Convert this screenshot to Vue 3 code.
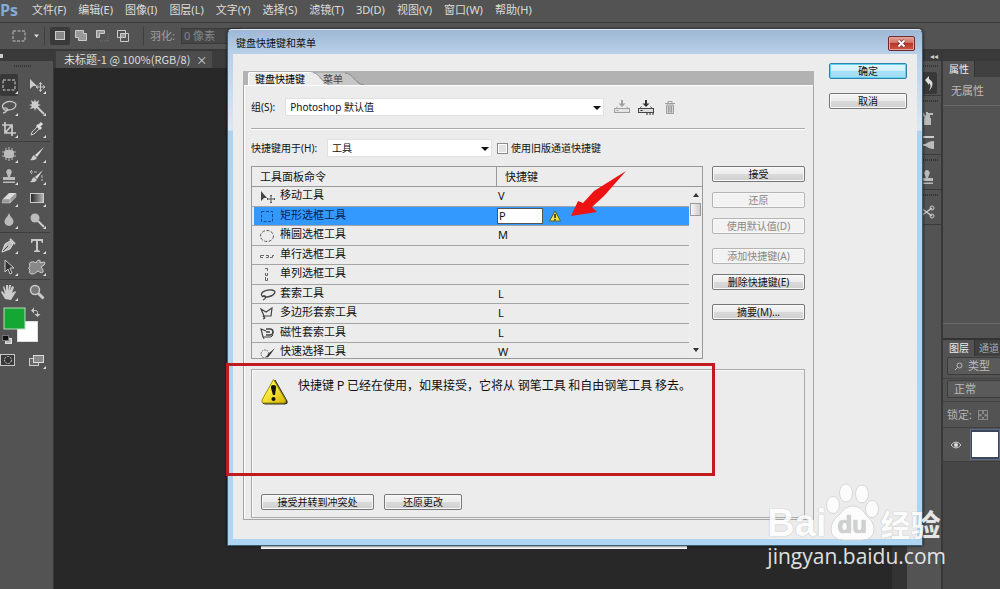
<template>
  <div class="app">
    <nav class="menu-bar">
      <span class="logo">Ps</span>
      <button v-for="item in menus" :key="item" class="menu-item">{{ item }}</button>
    </nav>

    <div class="options-bar">
      <button class="opt-btn preset" aria-label="工具预设">
        <svg width="28" height="14" viewBox="0 0 28 14">
          <rect x="1" y="2" width="12" height="10" fill="none" stroke="#c4c4c4" stroke-dasharray="3 1.5" />
          <path d="M22 5.500h5l-2.500 3z" fill="#ddd" />
        </svg>
      </button>
      <div class="modes">
        <button v-for="mode in modes" :key="mode.name" class="opt-btn" :class="{ active: mode.active }" :aria-label="mode.name">
          <svg width="14" height="14" viewBox="0 0 14 14" v-html="mode.body"></svg>
        </button>
      </div>
      <label class="feather" for="feather">羽化:</label>
      <input id="feather" class="feather-input" value="0 像素" />
    </div>

    <div class="workspace">
      <aside class="toolbox">
        <div class="dock-head left"><i></i></div>
        <div class="grip"></div>
        <div v-for="(group, g) in toolGroups" :key="g" class="tool-group">
          <button
            v-for="tool in group"
            :key="tool.name"
            class="tool"
            :class="{ active: tool.active, single: tool.single }"
            :aria-label="tool.name"
          >
            <svg width="18" height="18" viewBox="0 0 18 18" v-html="tool.body"></svg>
          </button>
        </div>
        <svg class="swatches" width="54" height="66" viewBox="0 0 54 66">
          <rect x="17.500" y="17.500" width="20" height="20" fill="#fff" stroke="#ddd" />
          <rect x="4" y="4" width="21" height="21" fill="#15a733" stroke="#b9dcbe" />
          <path d="M33 6.500h2.500q2 0 2 2v2" fill="none" stroke="#c8c8c8" />
          <path d="M31 6.500l3-3v6zM37.500 13l-3-3h6z" fill="#c8c8c8" />
          <rect x="5.500" y="34.500" width="6" height="5" fill="#bbb" stroke="#ddd" />
          <rect x="2.500" y="31.500" width="6" height="5" fill="#111" stroke="#777" />
          <rect x="0.500" y="50.500" width="14" height="11" fill="#3a3a3a" stroke="#c8c8c8" />
          <circle cx="8" cy="56" r="3.500" fill="#333" stroke="#c8c8c8" stroke-dasharray="2 1" />
          <rect x="29.500" y="54.500" width="9" height="7" fill="#666" stroke="#ccc" />
          <rect x="33.500" y="51.500" width="10" height="7" fill="#888" stroke="#ddd" />
          <path d="M46 65v-3l-3 3z" fill="#ddd" />
        </svg>
      </aside>

      <main class="document">
        <div class="doc-tabs">
          <div class="doc-tab">
            <span>未标题-1 @ 100%(RGB/8)</span>
            <button aria-label="关闭文档">×</button>
          </div>
        </div>
        <div class="stage">
          <div class="paper"></div>
          <div class="stage-scroll"></div>
        </div>
      </main>

      <aside class="icon-dock">
        <div class="dock-head right">◂◂</div>
        <div v-for="(group, g) in dockGroups" :key="g" class="dock-group">
          <div class="grip"></div>
          <button v-for="item in group" :key="item.name" class="dock-btn" :class="{ active: item.active }" :aria-label="item.name">
            <svg width="18" height="18" viewBox="0 0 18 18" v-html="item.body"></svg>
          </button>
        </div>
      </aside>

      <aside class="panels">
        <div class="dock-head"></div>
        <div class="panel-tabs"><button class="active">属性</button></div>
        <p class="empty">无属性</p>
        <div class="properties"></div>
        <div class="properties-foot"></div>
        <div class="panel-tabs layers-tabs">
          <button class="active">图层</button>
          <button>通道</button>
        </div>
        <div class="layer-row">
          <button class="field filter">
            <svg width="9" height="9" viewBox="0 0 9 9"><circle cx="5.500" cy="3.500" r="2.500" fill="none" stroke="#bbb" /><path d="M3.500 5.500L1 8" stroke="#bbb" /></svg>
            <span>类型</span>
          </button>
        </div>
        <div class="layer-row"><button class="field">正常</button></div>
        <div class="layer-row lock">
          <span>锁定:</span>
          <svg width="10" height="10" viewBox="0 0 10 10">
            <rect width="10" height="10" fill="#888" />
            <path d="M1 1h3v3H1zM6 1h3v3H6zM3.500 4h3v3h-3zM1 6.500h3V9H1zM6 6.500h3V9H6z" fill="#555" />
          </svg>
        </div>
        <div class="layer">
          <svg width="12" height="10" viewBox="0 0 12 10">
            <path d="M1 5q5-6 10 0q-5 6-10 0z" fill="none" stroke="#ccc" />
            <circle cx="6" cy="5" r="2" fill="#ddd" />
          </svg>
          <div class="thumb"><i></i></div>
        </div>
        <div class="layers-rest"></div>
      </aside>
    </div>

    <section class="dialog" role="dialog" aria-labelledby="dialog-title">
      <header class="title-bar">
        <h1 id="dialog-title">键盘快捷键和菜单</h1>
        <button class="close" aria-label="关闭">
          <svg width="11" height="9" viewBox="0 0 11 9">
            <path d="M2.500 1.500l6 6M8.500 1.500l-6 6" stroke="#6a3030" stroke-width="3.500" />
            <path d="M2.500 1.500l6 6M8.500 1.500l-6 6" stroke="#fff" stroke-width="2" />
          </svg>
        </button>
      </header>

      <div class="dialog-body">
        <div class="main">
          <div class="tabs">
            <svg width="130" height="14" viewBox="0 0 130 14">
              <path d="M70 14V2h32c8 0 10 11 19 12z" fill="#c6c6c6" />
              <path d="M102 2c8 0 10 11 19 12" fill="none" stroke="#888" />
              <path d="M5 14V3q0-2 2-2h60c10 0 10 12 20 13z" fill="#ececec" />
              <path d="M5.500 14V3q0-1.500 2-1.500h59.500" fill="none" stroke="#fff" />
              <path d="M70 1.500c8 2 9 11 17 12.500" fill="none" stroke="#999" />
            </svg>
            <button class="tab active">键盘快捷键</button>
            <button class="tab">菜单</button>
          </div>

          <div class="panel">
            <div class="row">
              <label for="group">组(S):</label>
              <div class="select group-select">
                <select id="group"><option>Photoshop 默认值</option></select>
              </div>
              <div class="set-actions">
                <button class="icon-btn dim" aria-label="存储">
                  <svg width="16" height="15" viewBox="0 0 16 15">
                    <path d="M8 0v4" stroke="#555" stroke-width="2" />
                    <path d="M4.500 3.500h7L8 7z" fill="#555" />
                    <path d="M3.500 6.500L1 9.500M12.500 6.500l2.500 3" fill="none" stroke="#666" />
                    <rect x="0.500" y="8.500" width="15" height="4" fill="#ddd" stroke="#555" />
                    <path d="M2.500 10.500h2" stroke="#555" />
                  </svg>
                </button>
                <button class="icon-btn" aria-label="新建">
                  <svg width="16" height="15" viewBox="0 0 16 15">
                    <path d="M8 0v4" stroke="#333" stroke-width="2" />
                    <path d="M4.500 3.500h7L8 7z" fill="#333" />
                    <path d="M3.500 6.500L1 9.500M12.500 6.500l2.500 3" fill="none" stroke="#555" />
                    <rect x="0.500" y="8.500" width="15" height="4" fill="#ddd" stroke="#444" />
                    <path d="M2.500 10.500h2M8 14h2M11 14h2M14 14h2" stroke="#222" />
                  </svg>
                </button>
                <button class="icon-btn dim" aria-label="删除">
                  <svg width="16" height="15" viewBox="0 0 16 15">
                    <path d="M3 3.500h10M6 3V1.500h4V3" fill="none" stroke="#555" />
                    <path d="M4.500 5h7v8.500h-7zM6.500 6v6.500M8 6v6.500M9.500 6v6.500" fill="#bbb" stroke="#555" />
                  </svg>
                </button>
              </div>
            </div>

            <hr />

            <div class="row">
              <label for="scope">快捷键用于(H):</label>
              <div class="select scope-select">
                <select id="scope"><option>工具</option></select>
              </div>
              <label class="check"><input type="checkbox" />使用旧版通道快捷键</label>
            </div>

            <div class="columns">
              <div class="list">
                <table>
                  <thead>
                    <tr><th class="name">工具面板命令</th><th>快捷键</th></tr>
                  </thead>
                  <tbody>
                    <tr v-for="(row, i) in rows" :key="row.name" :class="{ selected: i === selected }" @click="selected = i">
                      <td>
                        <div class="cell">
                          <svg width="16" height="14" viewBox="0 0 16 14" v-html="row.icon"></svg>
                          <span>{{ row.name }}</span>
                        </div>
                      </td>
                      <td>
                        <div v-if="i === selected" class="edit">
                          <input v-model="row.key" aria-label="快捷键" />
                          <svg width="12" height="12" viewBox="0 0 12 12">
                            <path d="M6 1L11.500 11H0.500z" fill="#f3e53c" stroke="#54602a" />
                            <path d="M6 4v4M6 9v1.500" stroke="#222" stroke-width="1.500" />
                          </svg>
                        </div>
                        <span v-else class="key">{{ row.key }}</span>
                      </td>
                    </tr>
                  </tbody>
                </table>
                <div class="scrollbar"><i class="up"></i><b></b><i class="down"></i></div>
              </div>

              <div class="side">
                <button class="btn">接受</button>
                <button class="btn" disabled>还原</button>
                <button class="btn" disabled>使用默认值(D)</button>
                <button class="btn spaced" disabled>添加快捷键(A)</button>
                <button class="btn">删除快捷键(E)</button>
                <button class="btn spaced">摘要(M)...</button>
              </div>
            </div>

            <div class="notice">
              <div class="message">
                <svg width="28" height="28" viewBox="0 0 28 28">
                  <defs>
                    <linearGradient id="warn" x1="0" y1="0" x2="1" y2="1">
                      <stop offset="0.300" stop-color="#fff34a" />
                      <stop offset="1" stop-color="#d9b400" />
                    </linearGradient>
                  </defs>
                  <path d="M14 2L26 23q1 3-2 3H4q-3 0-2-3z" fill="#333" stroke="#333" />
                  <path d="M12.500 1.500L24.500 22q1 3-1.500 3H3q-3 0-2-3z" fill="url(#warn)" stroke="#a39100" />
                  <path d="M12.500 7q3 0 2.500 3l-1 7h-2l-2-7q-.5-3 2.500-3z" fill="#111" />
                  <circle cx="12.500" cy="21" r="2" fill="#111" />
                </svg>
                <p>快捷键 P 已经在使用，如果接受，它将从 钢笔工具 和自由钢笔工具 移去。</p>
              </div>
              <div class="notice-actions">
                <button class="btn wide">接受并转到冲突处</button>
                <button class="btn">还原更改</button>
              </div>
            </div>
          </div>
        </div>

        <div class="confirm">
          <button class="btn primary">确定</button>
          <button class="btn">取消</button>
        </div>
      </div>

      <div class="highlight"></div>
      <svg class="arrow" width="58" height="48" viewBox="0 0 58 48">
        <path d="M56 0L24 20 13 32 8 30 1 45 27 41 22 36 34 25z" fill="#ee1212" />
      </svg>
    </section>

    <div class="watermark">
      <div class="brand">
        <span class="bai">Bai</span>
        <span class="paw">
          <svg width="54" height="58" viewBox="0 0 54 58">
            <g fill="#fff" stroke="#d4d4d4">
              <ellipse cx="7" cy="22" rx="6.500" ry="8.500" />
              <ellipse cx="20" cy="10" rx="6.500" ry="9" />
              <ellipse cx="36" cy="11" rx="6.500" ry="9" />
              <ellipse cx="46" cy="26" rx="6.500" ry="8.500" />
              <path d="M27 23q8 0 13 9 8 7 8 14 0 11-12 11H18Q5 57 5 46q0-7 8-14 6-9 14-9z" />
            </g>
          </svg>
          <span class="du">du</span>
        </span>
        <span class="jingyan">经验</span>
      </div>
      <div class="site">jingyan.baidu.com</div>
    </div>
  </div>
</template>

<script setup>
import { ref } from 'vue'

const menus = ['文件(F)', '编辑(E)', '图像(I)', '图层(L)', '文字(Y)', '选择(S)', '滤镜(T)', '3D(D)', '视图(V)', '窗口(W)', '帮助(H)']

const modes = [
  { name: '新选区', active: true, body: '<rect x="2.500" y="2.500" width="9" height="8" fill="#888" stroke="#ccc"/>' },
  { name: '添加到选区', body: '<path d="M1.500 1.500h8v3h3v7h-8v-3h-3z" fill="#999" stroke="#ccc"/>' },
  { name: '从选区减去', body: '<path d="M1.500 1.500h8v3h-5v4h-3z" fill="#999" stroke="#ccc"/><path d="M5 12h8V5" fill="none" stroke="#777" stroke-dasharray="1 1"/>' },
  { name: '与选区交叉', body: '<path d="M1.500 1.500h8v7h-8zM4.500 4.500h8v8h-8z" fill="none" stroke="#ccc"/><path d="M5 5h4v3H5z" fill="#999"/>' },
]

const toolGroups = [
  [
    { name: '矩形选框', active: true, body: '<rect x="3" y="4" width="12" height="10" fill="none" stroke="#d0d0d0" stroke-dasharray="3 1.500"/>' },
    { name: '移动', body: '<path d="M2 3v10l3-3h4z" fill="#ccc"/><path d="M12.500 7v8M8.500 11h8M11 8.500l1.500-2 1.500 2M11 13.500l1.500 2 1.500-2M10 9.500L8 11l2 1.500M15 9.500l2 1.500-2 1.500" fill="none" stroke="#ccc"/>' },
    { name: '套索', body: '<path d="M4 11C-1 7 7 2 13 4s2 8-5 8c-6 1-5-3-2-2s1 4-3 5" fill="none" stroke="#ccc" stroke-width="1.300"/>' },
    { name: '魔棒', body: '<path d="M8 8l8 8" stroke="#ccc" stroke-width="2"/><path d="M7 1l1 3 3-2-1 4 3 1-3 1 1 3-3-1-1 3-1-3-4 1 2-3-3-1 3-1-1-4 3 2z" fill="#ccc"/>' },
    { name: '裁剪', body: '<path d="M5 2v11h11M2 5h10v11M5 13l7-8" fill="none" stroke="#ccc" stroke-width="1.700"/>' },
    { name: '吸管', body: '<path d="M3 15l1-3 6-6 2 2-6 6z" fill="none" stroke="#ccc"/><path d="M9 5l4 4M11 6l3-3" stroke="#ddd" stroke-width="3"/>' },
  ],
  [
    { name: '修补', body: '<rect x="4" y="5" width="10" height="8" rx="3" fill="#bbb"/><path d="M6 3v12M9 2v14M12 3v12M2 7h14M2 11h14" stroke="#bbb"/>' },
    { name: '画笔', body: '<path d="M16 2L9 12 7 10z" fill="#ddd"/><path d="M6 10l3 3q-2 3-7 2 2-1 2-3z" fill="#ccc"/>' },
    { name: '仿制图章', body: '<path d="M9 2a3 3 0 0 1 2 5l-1 3h5v3H3v-3h5L7 7a3 3 0 0 1 2-5zM3 14.500h12v1.500H3z" fill="#bbb"/>' },
    { name: '历史记录画笔', body: '<path d="M15 3L9 12 7 10z" fill="#ddd"/><path d="M6 10l3 3q-2 3-7 2 2-1 2-3z" fill="#ccc"/><path d="M2 5h7M4 3L2 5l2 2M14 8v6" stroke="#bbb" fill="none" stroke-dasharray="3 1"/>' },
    { name: '橡皮擦', body: '<path d="M3 10l6-6h7l-6 6z" fill="#ddd"/><path d="M3 10h7v4H2zM10 10l6-6v4l-6 6z" fill="#999" stroke="#ccc" stroke-width=".5"/>' },
    { name: '渐变', body: '<defs><linearGradient id="grad"><stop stop-color="#222"/><stop offset="1" stop-color="#bbb"/></linearGradient></defs><rect x="2.500" y="4.500" width="13" height="9" fill="url(#grad)" stroke="#ccc"/>' },
    { name: '模糊', body: '<path d="M9 2q1 3 3 5c4 5-1 8-3 8s-7-3-3-8q2-2 3-5z" fill="#bbb"/>' },
    { name: '减淡', body: '<circle cx="7" cy="7" r="4.500" fill="#bbb"/><path d="M10 10l6 6" stroke="#ccc" stroke-width="2"/>' },
  ],
  [
    { name: '钢笔', body: '<path d="M2 16l3-8 5-3 3 3-3 5z" fill="#bbb" stroke="#ddd"/><path d="M3 15l5-5" stroke="#444"/><path d="M10 3l5 5" stroke="#ccc" stroke-width="2"/>' },
    { name: '文字', body: '<path d="M3 3h12v4h-1l-1-2h-3v9l2 1v1H6v-1l2-1V5H5L4 7H3z" fill="#c8c8c8"/>' },
    { name: '路径选择', body: '<path d="M5 2v12l3-3 2 5 2-1-2-5h4z" fill="#333" stroke="#ccc"/>' },
    { name: '自定形状', body: '<path d="M3 4q3-1 5 1 1-3 3-3t1 3q5-2 5 0t-4 4q3 3 2 5t-5-1q-4 4-7 3t-1-4q-3-1 0-4-2-3 1-4z" fill="#888" stroke="#ccc"/>' },
  ],
  [
    { name: '抓手', body: '<path d="M5 16l-4-7 1-1 3 3L3 4l1-1 2 5V2h2v6l1-6h2l-1 6 2-5 2 1-2 6 3-2 1 1-5 8z" fill="#ccc"/>' },
    { name: '缩放', single: true, body: '<circle cx="7" cy="7" r="4.500" fill="#777" stroke="#ccc" stroke-width="1.500"/><path d="M10.500 10.500l5 5" stroke="#ccc" stroke-width="3"/>' },
  ],
]

const dockGroups = [
  [{ name: '历史记录', active: true, body: '<path d="M2 3v3M2 8v3M2 13v3" stroke="#ccc" stroke-width="3"/><path d="M7 6l4-4v3q7 4 0 12 3-6 0-8v2z" fill="#ddd"/>' }],
  [
    { name: '画笔预设', body: '<path d="M6 9h7v7H6z" fill="#bbb"/><path d="M3 2l5 7M9 3v6M15 5h-4v4" fill="none" stroke="#bbb" stroke-width="2"/>' },
    { name: '画笔', body: '<path d="M1 4h15M1 12h8" stroke="#ccc" stroke-width="2"/><path d="M7 12q3-4 9-4v8q-6 0-9-4z" fill="#bbb"/>' },
  ],
  [{ name: '仿制源', body: '<path d="M9 2a3 3 0 0 1 2 5l-1 3h5v3H3v-3h5L7 7a3 3 0 0 1 2-5zM3 14.500h12v1.500H3z" fill="#bbb"/>' }],
  [{ name: '工具预设', body: '<path d="M3 5l11 8M3 13l11-8" stroke="#ccc" stroke-width="1.500"/><circle cx="14" cy="5" r="2" fill="none" stroke="#ccc"/><circle cx="14" cy="13" r="2" fill="none" stroke="#ccc"/>' }],
]

const rows = ref([
  { name: '移动工具', key: 'V', icon: '<path d="M1 1v10l3-3h3z" fill="#444"/><path d="M11 5v8M7 9h8M10 6l1-1 1 1M10 12l1 1 1-1M8 8L7 9l1 1M14 8l1 1-1 1" fill="none" stroke="#555"/>' },
  { name: '矩形选框工具', key: 'P', icon: '<rect x="1.500" y="1.500" width="11" height="10" fill="none" stroke="#134a8c" stroke-dasharray="3 1.500"/>' },
  { name: '椭圆选框工具', key: 'M', icon: '<ellipse cx="7" cy="7" rx="6.500" ry="5.500" fill="none" stroke="#555" stroke-dasharray="3 1.500"/>' },
  { name: '单行选框工具', key: '', icon: '<path d="M4 6.500H0.500v2H3M6 8.500h2.500v-2H6M10 8.500h2.500v-2h1.500" fill="none" stroke="#666"/>' },
  { name: '单列选框工具', key: '', icon: '<path d="M5 0.500h2.500V3M5.500 5v2.500h2V5M5.500 9v3.500h2V10" fill="none" stroke="#666"/>' },
  { name: '套索工具', key: 'L', icon: '<path d="M3 9C-2 5 6 1 12 2s2 6-5 7c-5 0-4-2-2-1s0 3-2 4" fill="none" stroke="#444" stroke-width="1.300"/>' },
  { name: '多边形套索工具', key: 'L', icon: '<path d="M4 9L1 2l5 3 6-4-1 8H5q-3 0-1 1t-1 2" fill="none" stroke="#444" stroke-width="1.200"/>' },
  { name: '磁性套索工具', key: 'L', icon: '<path d="M3 10L1 2l5 2" fill="none" stroke="#444" stroke-width="1.200"/><path d="M6 2h4q3 0 3 3t-3 3H6M6 5h4" fill="none" stroke="#444" stroke-width="1.600"/><path d="M3 10h8l2-2M3 10l1 2" fill="none" stroke="#444"/>' },
  { name: '快速选择工具', key: 'W', icon: '<circle cx="5" cy="8" r="4" fill="none" stroke="#555" stroke-dasharray="1.500 1"/><path d="M15 2l-5 7q-2 3-5 2 2 0 3-3z" fill="#333"/>' },
])

const selected = ref(1)
</script>

<style>
body {
  margin: 0;
  background: #282828;
}
</style>

<style scoped>
.app {
  position: relative;
  display: flex;
  flex-direction: column;
  height: 100vh;
  overflow: hidden;
  font-family: "Noto Sans", "Noto Sans CJK SC", sans-serif;
  font-size: 11px;
  line-height: 16px;
  color: #ddd;
  background: #282828;
}

button,
input,
select {
  font: inherit;
  color: inherit;
  margin: 0;
  padding: 0;
  border: none;
  background: none;
  box-sizing: border-box;
  border-radius: 0;
}

svg {
  display: block;
  flex: none;
}

p,
h1 {
  margin: 0;
}

/* menu and options */
.menu-bar {
  display: flex;
  align-items: center;
  gap: 12px;
  height: 19px;
  padding-bottom: 3px;
  background: #535353;
  white-space: nowrap;
}

.logo {
  width: 20px;
  font: bold 16px/18px "Open Sans", sans-serif;
  color: #82abd8;
}

.options-bar {
  display: flex;
  align-items: center;
  height: 28px;
  box-sizing: border-box;
  background: #535353;
  border-top: 1px solid #3a3a3a;
  border-bottom: 1px solid #383838;
}

.preset {
  padding: 0 4px 0 12px;
}

.modes {
  display: flex;
  gap: 1px;
  padding: 0 10px 0 5px;
  border: solid #3e3e3e;
  border-width: 0 1px;
}

.modes .opt-btn {
  padding: 2px 3px;
  border-radius: 2px;
}

.modes .active {
  background: #3a3a3a;
}

.feather {
  margin: 0 6px 0 6px;
  color: #a0a0a0;
}

.feather-input {
  width: 60px;
  height: 16px;
  padding-left: 2px;
  background: #464646;
  border: 1px solid #3a3a3a;
  color: #858585;
}

/* workspace */
.workspace {
  flex: 1;
  display: flex;
  min-height: 0;
  border-top: 1px solid #383838;
}

.dock-head {
  height: 10px;
  flex: none;
  background: #3a3a3a;
}

.dock-head.left i {
  display: block;
  width: 3px;
  height: 4px;
  background: #ccc;
  position: relative;
  top: 3px;
}

.dock-head.right {
  font-size: 8px;
  line-height: 10px;
  text-align: right;
  padding-right: 3px;
  color: #ccc;
}

.grip {
  width: 17px;
  height: 2px;
  margin: 4px 0 5px 14px;
  background: repeating-linear-gradient(90deg, #333 0 1px, #535353 1px 2px);
}

.toolbox {
  width: 53px;
  flex: none;
  background: #535353;
  border-right: 1px solid #383838;
}

.toolbox .grip {
  margin-bottom: 6px;
}

.tool-group {
  display: grid;
  grid-template-columns: 18px 38px;
  padding: 1px 0;
  width: 50px;
  border-bottom: 1px solid #3e3e3e;
}

.tool-group:last-of-type {
  border: none;
}

.tool {
  position: relative;
  display: flex;
  justify-content: center;
  align-items: center;
  height: 22px;
}

.tool::after {
  content: '';
  position: absolute;
  right: 0;
  bottom: 2px;
  border: solid transparent;
  border-width: 3px 0 0 3px;
  border-right: 3px solid #ddd;
}

.tool:nth-child(even)::after {
  right: 10px;
}

.tool.single::after {
  display: none;
}

.tool.active {
  background: #383838;
  border-radius: 2px;
}

.document {
  flex: 1;
  display: flex;
  flex-direction: column;
  min-width: 0;
}

.doc-tabs {
  display: flex;
  height: 17px;
  padding-left: 2px;
  background: #3c3c3c;
}

.doc-tab {
  display: flex;
  gap: 6px;
  padding: 0 5px 0 8px;
  background: #4c4c4c;
  font-family: "Noto Sans CJK SC", sans-serif;
  white-space: nowrap;
}

.stage {
  flex: 1;
  display: flex;
  justify-content: space-between;
}

.paper {
  width: 50%;
  height: 481px;
  margin-left: 207px;
  background: #fff;
}

.stage-scroll {
  width: 14px;
  background: #333;
}

.icon-dock {
  width: 34px;
  flex: none;
  background: #535353;
  border-left: 1px solid #333;
  border-right: 2px solid #383838;
}

.dock-group {
  border-bottom: 1px solid #3a3a3a;
  padding-bottom: 1px;
}

.dock-btn {
  display: flex;
  justify-content: center;
  align-items: center;
  width: 20px;
  height: 22px;
  margin-left: 10px;
  border-radius: 2px;
}

.dock-btn + .dock-btn {
  margin-top: 2px;
}

.dock-btn.active {
  background: #383838;
}

.panels {
  display: flex;
  flex-direction: column;
  width: 57px;
  flex: none;
  overflow: hidden;
  background: #535353;
}

.panel-tabs {
  display: flex;
  flex: none;
  height: 16px;
  background: #404040;
}

.panel-tabs button {
  flex: none;
  padding: 0 5px 0 6px;
  font-size: 10px;
  border-right: 1px solid #333;
  color: #aaa;
}

.panel-tabs button + button {
  padding: 0 4px;
}

.panel-tabs .active {
  background: #535353;
  color: #eee;
}

.empty {
  padding: 6px 8px;
  border-bottom: 1px solid #686868;
  color: #bbb;
}

.properties {
  height: 217px;
  flex: none;
}

.properties-foot {
  height: 14px;
  flex: none;
  border-top: 1px solid #6a6a6a;
  border-bottom: 2px solid #333;
}

.layer-row {
  flex: none;
  height: 23px;
  box-sizing: border-box;
  padding: 1px 0 0 4px;
  border-bottom: 1px solid #414141;
  white-space: nowrap;
}

.field {
  display: flex;
  align-items: center;
  gap: 5px;
  width: 80px;
  height: 18px;
  padding-left: 6px;
  border: 1px solid #3c3c3c;
  background: #5a5a5a;
  border-radius: 2px;
  color: #bbb;
}

.lock {
  display: flex;
  gap: 6px;
  align-items: center;
  height: 26px;
  padding-top: 0;
  color: #b5b5b5;
}

.layer {
  flex: none;
  display: flex;
  align-items: center;
  gap: 8px;
  height: 33px;
  padding-left: 7px;
  border-bottom: 1px solid #3e3e3e;
}

.thumb {
  flex: 1;
  height: 31px;
  box-sizing: border-box;
  padding: 2px 1px;
  border: 1px solid #5d6f88;
  background: #3b4758;
}

.thumb i {
  display: block;
  width: 26px;
  height: 25px;
  background: #fff;
}

.layers-rest {
  flex: 1;
  background: #464646;
}

/* dialog */
.dialog {
  position: absolute;
  left: 227px;
  right: 77px;
  top: 29px;
  box-sizing: border-box;
  padding: 0 5px 6px;
  border: 1px solid #3d5d70;
  border-top-color: #dfeaf5;
  border-radius: 5px 5px 0 0;
  background: linear-gradient(#9db8d5, #b9d0e9 24px, #dbe8f4 100px, #aed3ef 101px, #aed6f3);
  box-shadow: 0 0 3px #111;
  font-size: 10px;
  color: #111;
}

.title-bar {
  display: flex;
  justify-content: space-between;
  align-items: center;
  height: 24px;
  padding: 2px 2px 0 3px;
  box-sizing: border-box;
}

.title-bar h1 {
  font-size: 10px;
  font-weight: normal;
}

.close {
  display: flex;
  justify-content: center;
  align-items: center;
  width: 27px;
  height: 15px;
  border: 1px solid #6e2a2e;
  border-radius: 2px;
  background: linear-gradient(#e2a19a, #cf6c60 50%, #b93427 50%, #cf5a48);
  box-shadow: inset 0 0 0 1px #e0a49c;
}

.dialog-body {
  display: flex;
  align-items: flex-start;
  gap: 15px;
  padding: 9px 10px 19px;
  background: #ececec;
}

.main {
  flex: 1;
  min-width: 0;
  margin-top: 8px;
}

.tabs {
  position: relative;
  display: flex;
  gap: 18px;
  height: 14px;
  padding-left: 12px;
  background: #b2b2b2;
}

.tabs svg {
  position: absolute;
  left: 0;
  top: 0;
}

.tab {
  position: relative;
  line-height: 16px;
  color: #444;
}

.tab.active {
  color: #000;
}

.panel {
  padding: 13px 8px 1px 7px;
  border: 1px solid #a5a5a5;
  border-top: none;
  box-shadow: inset 1px 1px #fff;
}

.row {
  display: flex;
  align-items: center;
  gap: 10px;
  height: 18px;
  white-space: nowrap;
}

.select {
  position: relative;
  height: 18px;
}

.select select {
  appearance: none;
  display: block;
  width: 100%;
  height: 18px;
  padding-left: 4px;
  border: 1px solid #e0e0e0;
  background: #fff;
}

.select::after {
  content: '';
  position: absolute;
  right: 3px;
  top: 8px;
  border: solid transparent;
  border-width: 4px 4px 0;
  border-top-color: #111;
}

.group-select {
  flex: 0 1 319px;
}

.scope-select {
  flex: 0 1 165px;
}

.set-actions {
  display: flex;
  gap: 8px;
}

.dim {
  opacity: 0.5;
}

hr {
  height: 1px;
  margin: 12px 0 9px;
  border: none;
  background: #aaa;
  border-bottom: 1px solid #fff;
}

.check {
  display: flex;
  align-items: center;
  gap: 3px;
  margin-left: -5px;
}

.check input {
  appearance: none;
  width: 11px;
  height: 11px;
  border: 1px solid #8a8a8a;
  background: #e2e2e2;
  box-shadow: inset 0 0 0 1px #fff;
}

.columns {
  display: flex;
  gap: 9px;
  margin-top: 9px;
}

.list {
  position: relative;
  flex: 1;
  height: 193px;
  box-sizing: border-box;
  border: 1px solid #999;
  overflow: hidden;
  font-size: 11px;
}

table {
  width: 100%;
  table-layout: fixed;
  border-collapse: separate;
  border-spacing: 0;
}

th {
  height: 20px;
  padding: 0 0 0 8px;
  box-sizing: border-box;
  border-bottom: 1px solid #999;
  font-weight: normal;
  text-align: left;
}

th.name {
  width: 245px;
  border-right: 1px solid #999;
}

td {
  height: 20px;
  padding: 0;
  box-sizing: border-box;
  border-bottom: 1px solid #a5a5a5;
  vertical-align: top;
}

tr:nth-child(even) td {
  height: 19px;
}

.selected td {
  background: #3399ff;
}

.selected td:first-child {
  box-shadow: inset 2px 0 #ececec;
  color: #0b2350;
}

.cell {
  display: flex;
  gap: 4px;
  height: 18px;
  padding-left: 8px;
  line-height: 15px;
}

.cell svg {
  margin-top: 3px;
}

.key {
  display: block;
  height: 18px;
  padding-left: 1px;
  line-height: 18px;
}

.edit {
  display: flex;
  align-items: center;
  gap: 6px;
  height: 18px;
}

.edit input {
  width: 46px;
  height: 16px;
  padding-left: 1px;
  border: 1px solid #555;
  background: #fff;
  color: #111;
}

.scrollbar {
  position: absolute;
  top: 20px;
  right: 0;
  bottom: 0;
  display: flex;
  flex-direction: column;
  align-items: center;
  width: 13px;
  background: #ededed;
}

.scrollbar b {
  width: 11px;
  height: 13px;
  margin-bottom: auto;
  box-sizing: border-box;
  border: 1px solid #999;
  background: linear-gradient(90deg, #f6f6f6, #ccc);
}

.scrollbar i {
  margin: 6px 0;
  border: solid transparent;
  border-width: 0 3px 4px;
  border-bottom-color: #333;
}

.scrollbar .down {
  border-width: 4px 3px 0;
  border-top-color: #333;
}

.side {
  display: flex;
  flex-direction: column;
  gap: 10px;
  width: 93px;
}

.side .spaced {
  margin-top: 4px;
}

.btn {
  flex: none;
  height: 16px;
  line-height: 14px;
  border: 1px solid #777;
  border-radius: 2px;
  background: linear-gradient(#f6f6f6, #ebebeb 50%, #dadada 50%, #cfcfcf);
  box-shadow: inset 0 0 0 1px #f8f8f8;
  white-space: nowrap;
}

.btn:disabled {
  border-color: #b5b5b5;
  background: #f2f2f2;
  color: #888;
}

.primary {
  border-color: #2d84a8;
  background: linear-gradient(#e6f7fd, #cfeffc 50%, #a6e0f8 50%, #a4dcf3);
  box-shadow: inset 0 0 0 1px #5fd0f2;
}

.notice {
  margin-top: 10px;
  padding: 8px 9px 7px;
  border: 1px solid #aaa;
  box-shadow: inset 1px 1px #fafafa;
}

.message {
  display: flex;
  gap: 9px;
  min-height: 116px;
  font-family: "Noto Sans CJK SC", sans-serif;
  font-size: 12px;
  line-height: 14px;
}

.notice-actions {
  display: flex;
  gap: 10px;
}

.notice-actions .btn {
  width: 78px;
}

.notice-actions .wide {
  width: 113px;
}

.confirm {
  display: flex;
  flex-direction: column;
  gap: 14px;
  width: 78px;
}

.highlight {
  position: absolute;
  left: -2px;
  top: 333px;
  width: 489px;
  height: 113px;
  box-sizing: border-box;
  border: 3px solid #c01c20;
}

.arrow {
  position: absolute;
  left: 342px;
  top: 141px;
}

/* watermark */
.watermark {
  position: absolute;
  right: 54px;
  bottom: 18px;
  color: #fff;
  opacity: 0.85;
  pointer-events: none;
}

.brand {
  display: flex;
  align-items: flex-end;
  height: 58px;
  text-shadow: 0 0 1px #999;
}

.bai {
  font: bold 38px/36px "Liberation Sans", sans-serif;
}

.paw {
  position: relative;
}

.du {
  position: absolute;
  left: 11px;
  bottom: 2px;
  font: bold 24px/28px "Liberation Sans", sans-serif;
  color: #ccc;
}

.jingyan {
  font: bold 30px/36px "Noto Sans CJK SC", sans-serif;
}

.site {
  font: 21px/30px "Open Sans", sans-serif;
}
</style>
